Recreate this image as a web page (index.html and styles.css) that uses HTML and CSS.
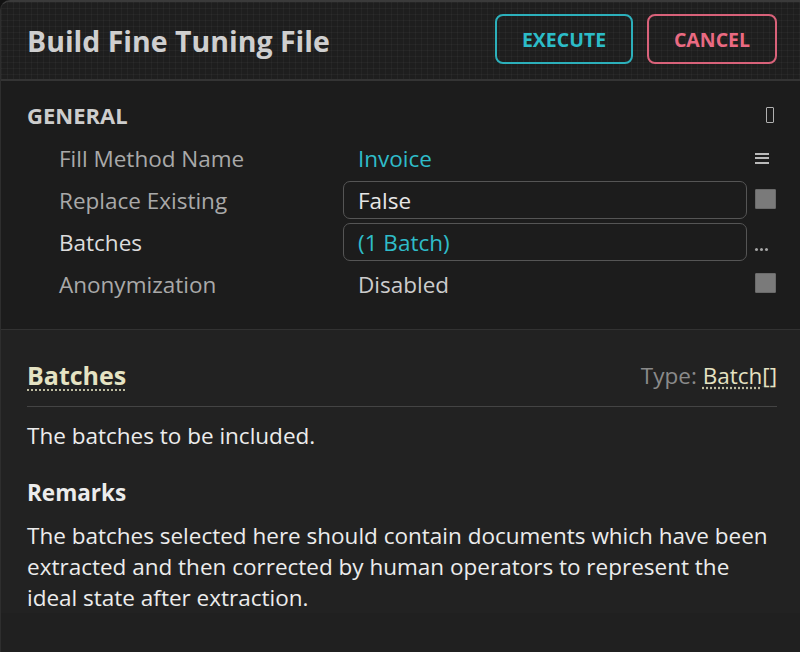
FILE: index.html
```html
<!DOCTYPE html>
<html>
<head>
<meta charset="utf-8">
<link rel="stylesheet" href="styles.css">
</head>
<body>
<div class="dialog">
  <div class="header">
    <h1 class="title">Build Fine Tuning File</h1>
    <div class="actions">
      <button class="btn btn-execute">EXECUTE</button>
      <button class="btn btn-cancel">CANCEL</button>
    </div>
  </div>
  <div class="general">
    <div class="section-head">
      <span class="section-title">GENERAL</span>
      <span class="tofu"></span>
    </div>
    <div class="props">
      <div class="prop-label">Fill Method Name</div>
      <div class="prop-value accent">Invoice</div>
      <div class="prop-icon"><span class="menu-icon"><i></i><i></i><i></i></span></div>

      <div class="prop-label">Replace Existing</div>
      <div class="prop-value boxed">False</div>
      <div class="prop-icon"><span class="square"></span></div>

      <div class="prop-label selected">Batches</div>
      <div class="prop-value boxed accent">(1 Batch)</div>
      <div class="prop-icon"><span class="dots"><i></i><i></i><i></i></span></div>

      <div class="prop-label">Anonymization</div>
      <div class="prop-value muted">Disabled</div>
      <div class="prop-icon"><span class="square"></span></div>
    </div>
  </div>
  <div class="docs">
    <div class="docs-head">
      <span class="docs-title">Batches</span>
      <span class="docs-type">Type: <span class="type-link">Batch[]</span></span>
    </div>
    <p class="docs-summary">The batches to be included.</p>
    <h2 class="docs-sub">Remarks</h2>
    <p class="docs-text">The batches selected here should contain documents which have been extracted and then corrected by human operators to represent the ideal state after extraction.</p>
  </div>
</div>
</body>
</html>
```

FILE: styles.css
```css
* { box-sizing: border-box; }
html, body { margin: 0; padding: 0; }
body {
  background: #121212;
  font-family: "Open Sans", "Noto Sans", sans-serif;
  width: 800px;
  height: 652px;
  overflow: hidden;
}
.dialog {
  width: 800px;
  height: 652px;
  background: #202020;
  border-top: 2px solid #3a3a3a;
  border-left: 1px solid #2e2e2e;
  border-top-left-radius: 10px;
  overflow: hidden;
}
.header {
  height: 79px;
  display: flex;
  align-items: center;
  justify-content: space-between;
  padding: 0 23px 0 26px;
  background-color: #1e1e1e;
  background-image:
    repeating-linear-gradient(to right, rgba(255,255,255,0.03) 0 1px, transparent 1px 6px),
    repeating-linear-gradient(to bottom, rgba(255,255,255,0.03) 0 1px, transparent 1px 6px);
  border-bottom: 2px solid #343434;
}
.title {
  margin: 0 0 0 0;
  font-size: 28.5px;
  font-weight: 700;
  color: #cfcfcf;
  letter-spacing: 0;
}
.actions {
  display: flex;
  gap: 14px;
  margin-top: -3px;
}
.btn {
  height: 50px;
  border-radius: 8px;
  background: transparent;
  font-family: "Open Sans", sans-serif;
  font-weight: 700;
  font-size: 19.5px;
  border: 2px solid;
  padding: 0;
}
.btn-execute { width: 138px; color: #2cbcc8; border-color: #2cb0bb; }
.btn-cancel { width: 130px; color: #ea6a82; border-color: #d9627a; }

.general {
  background: #1c1c1c;
  padding: 22px 24px 26px 26px;
  border-bottom: 1px solid #323232;
}
.section-head {
  display: flex;
  justify-content: space-between;
  align-items: center;
  height: 24px;
}
.section-title {
  font-size: 22px;
  font-weight: 700;
  color: #cdcdcd;
}
.tofu {
  width: 8px;
  height: 16px;
  border: 1.5px solid #b0b0b0;
  border-radius: 1px;
  margin-right: 2px;
}
.props {
  margin-top: 12px;
  display: grid;
  grid-template-columns: 308px 404px 22px;
  column-gap: 8px;
  row-gap: 4px;
  grid-auto-rows: 38px;
}
.prop-label {
  padding-left: 32px;
  font-size: 22.5px;
  color: #a9a9a9;
  display: flex;
  align-items: center;
}
.prop-label.selected { color: #dcdcdc; }
.prop-value {
  font-size: 22.5px;
  color: #e6e6e6;
  display: flex;
  align-items: center;
  padding-left: 14px;
  border: 1px solid transparent;
  border-radius: 7px;
}
.prop-value.boxed { border-color: #555555; }
.prop-value.accent { color: #2fbcc9; }
.prop-value.muted { color: #cccccc; }
.prop-icon {
  display: flex;
  align-items: center;
  justify-content: flex-start;
}
.square {
  width: 21px;
  height: 20px;
  background: #7a7a7a;
  border: 1px solid #6a6a6a;
  border-radius: 1px;
  margin-top: -2px;
}
.menu-icon {
  display: flex;
  flex-direction: column;
  gap: 2.5px;
  width: 14px;
  margin-left: 0;
}
.menu-icon i {
  display: block;
  height: 2px;
  background: #b9b9b9;
}
.dots {
  display: flex;
  gap: 2px;
  margin-top: 14px;
  margin-left: 0;
}
.dots i {
  display: block;
  width: 3px;
  height: 3px;
  background: #a5a5a5;
  border-radius: 50%;
}

.docs {
  background: #222222;
  padding: 29px 23px 0 26px;
}
.docs-head {
  display: flex;
  justify-content: space-between;
  align-items: center;
  height: 32px;
  box-sizing: content-box;
  padding-bottom: 15px;
  border-bottom: 1px solid #444444;
}
.docs-title {
  font-size: 25px;
  font-weight: 700;
  color: #e5e3c3;
  text-decoration: underline dotted #bdbba0;
  text-underline-offset: 4px;
  text-decoration-thickness: 2px;
}
.docs-type {
  font-size: 22.5px;
  color: #8a8a8a;
}
.type-link {
  color: #e5e3c3;
  text-decoration: underline dotted #bdbba0;
  text-underline-offset: 4px;
}
.docs-summary {
  margin: 13px 0 0;
  font-size: 22.5px;
  line-height: 31px;
  color: #ececec;
}
.docs-sub {
  margin: 26px 0 0;
  font-size: 22.5px;
  font-weight: 700;
  line-height: 31px;
  color: #ececec;
}
.docs-text {
  margin: 12px 0 0;
  font-size: 22.5px;
  line-height: 31px;
  color: #ececec;
}
```
